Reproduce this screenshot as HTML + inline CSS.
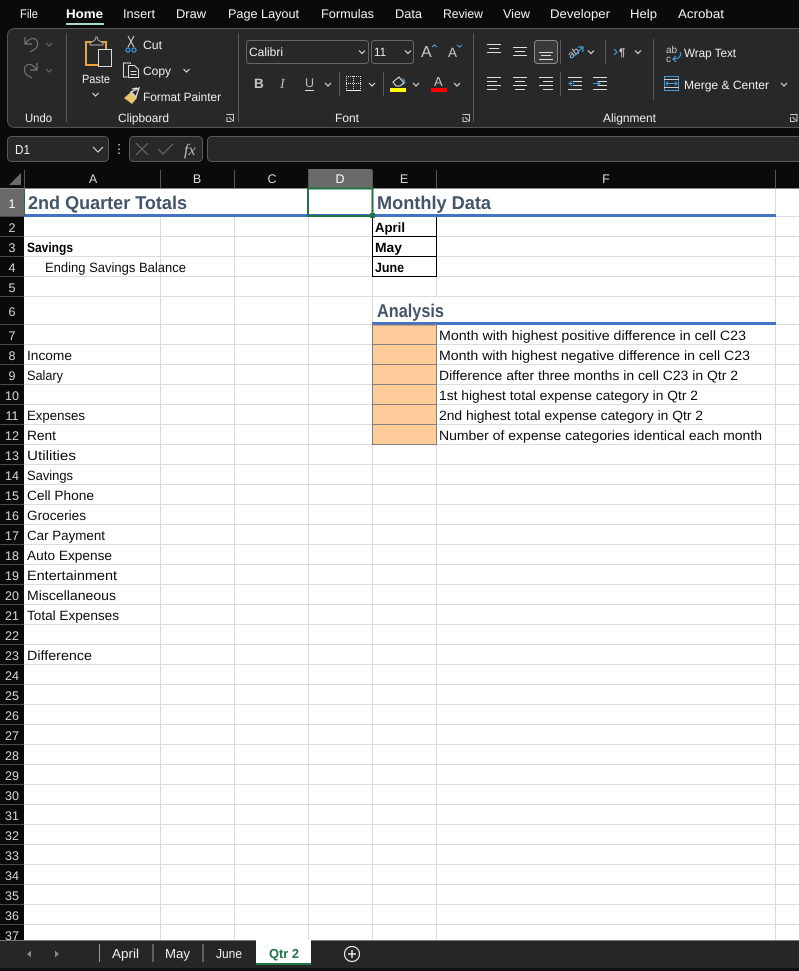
<!DOCTYPE html>
<html><head><meta charset="utf-8"><style>
html,body{margin:0;padding:0;background:#000;overflow:hidden}
svg{display:block}
text{font-family:"Liberation Sans",sans-serif;white-space:pre;text-rendering:geometricPrecision}
.m{font-size:12.5px;fill:#f2f2f2}
.r{font-size:12px;fill:#eeeeee}
.h{font-size:12.5px;fill:#d6d6d6;text-anchor:middle}
.c{font-size:13.5px;fill:#0b0b0b}
.b{font-size:13.5px;fill:#000;font-weight:bold}
.t{font-size:18.5px;fill:#44546a;font-weight:bold}
.i{fill:none;stroke:#dcdcdc;stroke-width:1}
.g{stroke:#dcdcdc;stroke-width:1}
.s{stroke:#5a5a5a;stroke-width:1}
</style></head><body>
<svg xmlns="http://www.w3.org/2000/svg" width="799" height="971" viewBox="0 0 799 971">
<defs><path id="v" d="M0 0l3 3 3-3" fill="none" stroke="#d8d8d8" stroke-width="1.2"/>
<path id="d" d="M0 0l3 3 3-3" fill="none" stroke="#666" stroke-width="1.2"/>
<path id="l" d="M0 0h7v7M.5 2.5V7H5M2.5 2.5L7 7" fill="none" stroke="#c8c8c8" stroke-width="1"/></defs>
<rect width="799" height="971" fill="#0a0a0a"/>

<!-- menu -->
<text class="m" x="20" y="18" textLength="18" lengthAdjust="spacingAndGlyphs">File</text>
<text class="m" x="66" y="18" textLength="37" lengthAdjust="spacingAndGlyphs" font-weight="bold" style="fill:#fff">Home</text>
<rect x="66" y="23" width="38" height="2" fill="#a8dcc0"/>
<text class="m" x="123" y="18" textLength="32" lengthAdjust="spacingAndGlyphs">Insert</text>
<text class="m" x="176" y="18" textLength="30" lengthAdjust="spacingAndGlyphs">Draw</text>
<text class="m" x="228" y="18" textLength="71" lengthAdjust="spacingAndGlyphs">Page Layout</text>
<text class="m" x="321" y="18" textLength="53" lengthAdjust="spacingAndGlyphs">Formulas</text>
<text class="m" x="395" y="18" textLength="27" lengthAdjust="spacingAndGlyphs">Data</text>
<text class="m" x="443" y="18" textLength="40" lengthAdjust="spacingAndGlyphs">Review</text>
<text class="m" x="503" y="18" textLength="27" lengthAdjust="spacingAndGlyphs">View</text>
<text class="m" x="550" y="18" textLength="60" lengthAdjust="spacingAndGlyphs">Developer</text>
<text class="m" x="630" y="18" textLength="27" lengthAdjust="spacingAndGlyphs">Help</text>
<text class="m" x="678" y="18" textLength="46" lengthAdjust="spacingAndGlyphs">Acrobat</text>

<!-- ribbon -->
<rect x="7.5" y="28.5" width="810" height="99" rx="7" fill="#282828" stroke="#555"/>
<path class="s" d="M66.5 33v89M238.5 33v89M473.5 33v89"/>
<!-- undo/redo -->
<path d="M25 37v7h7M25 44c3-4 7-7 10-5 4 2 3 8 0 10l-5 3" fill="none" stroke="#747474" stroke-width="1.2"/>
<path d="M37 63v7h-7M37 70c-3-4-7-7-10-5-4 2-3 8 0 10l5 3" fill="none" stroke="#747474" stroke-width="1.2"/>
<use href="#d" x="46" y="43"/><use href="#d" x="46" y="69"/>
<!-- paste -->
<path d="M92 42h-6v23h12M100 42h6v8" fill="none" stroke="#e8a33a" stroke-width="2"/>
<path d="M90 43l5-3 1-3h1l1 3 5 3v2H90z" fill="#282828" stroke="#aaa"/>
<rect x="98.500" y="49.500" width="13" height="17" fill="#282828" stroke="#d8d8d8"/>
<text class="r" x="82" y="83" textLength="28" lengthAdjust="spacingAndGlyphs">Paste</text>
<use href="#v" x="92.500" y="93"/>
<!-- scissors -->
<path d="M128 36l6 11M134 36l-6 11" class="i"/>
<circle cx="128" cy="50" r="2" fill="none" stroke="#3d9be0" stroke-width="1.200"/><circle cx="134" cy="50" r="2" fill="none" stroke="#3d9be0" stroke-width="1.200"/>
<text class="r" x="143" y="49" textLength="19" lengthAdjust="spacingAndGlyphs">Cut</text>
<!-- copy icon -->
<path d="M127.500 77h-4V63h7v1" class="i"/><path d="M128.500 65.500h6l4 4v8h-10zM130.500 71.500h6M130.500 74.500h6" class="i"/>
<text class="r" x="143" y="75" textLength="28" lengthAdjust="spacingAndGlyphs">Copy</text>
<use href="#v" x="183.500" y="69"/>
<!-- brush -->
<path d="M124 98l7-6 6 6-5 6z" fill="#e9c46a"/>
<path d="M131 92l6-3 2-1-2 6-1 3zM132 89l5-1" fill="none" stroke="#ddd" stroke-width="1.300"/>
<text class="r" x="143" y="101" textLength="78" lengthAdjust="spacingAndGlyphs">Format Painter</text>
<text class="r" x="25" y="122" textLength="27" lengthAdjust="spacingAndGlyphs">Undo</text>
<text class="r" x="118" y="122" textLength="51" lengthAdjust="spacingAndGlyphs">Clipboard</text>
<use href="#l" x="226.500" y="114.500"/>

<!-- font -->
<rect x="246.500" y="40.500" width="122" height="23" rx="3" fill="#282828" stroke="#666"/>
<rect x="371.500" y="40.500" width="42" height="23" rx="3" fill="#282828" stroke="#666"/>
<text class="r" x="249" y="56" textLength="34" lengthAdjust="spacingAndGlyphs">Calibri</text>
<text class="r" x="374" y="56" textLength="12" lengthAdjust="spacingAndGlyphs">11</text>
<use href="#v" x="359" y="50.500"/><use href="#v" x="405" y="50.500"/>
<text x="421" y="57" style="font-size:16px;fill:#c8c8c8">A</text>
<path d="M432 47l2.500-2 2.500 2" fill="none" stroke="#4aa3df" stroke-width="1.100"/>
<text x="448" y="57" style="font-size:13.500px;fill:#c8c8c8">A</text>
<path d="M457 45l2.500 2 2.500-2" fill="none" stroke="#4aa3df" stroke-width="1.100"/>
<text x="254" y="88" style="font-size:13.500px;fill:#c4c4c4;font-weight:bold">B</text>
<text x="280" y="88" style="font-family:'Liberation Serif',serif;font-size:14px;fill:#bbb;font-style:italic">I</text>
<text x="305" y="87" style="font-size:12.500px;fill:#bbb">U</text>
<path d="M305 90.500h9" class="i"/>
<use href="#v" x="325" y="83"/>
<path class="s" d="M339.500 72v24M383.500 72v24M560.500 72v24"/>
<path d="M346 76.500h15M346 83.500h15" stroke="#ddd" stroke-dasharray="1 1" fill="none"/>
<path d="M346.500 76v14M353.500 76v14M360.500 76v14" stroke="#ddd" stroke-dasharray="1 1" fill="none"/>
<path d="M346 90.500h15" stroke="#eee"/>
<use href="#v" x="369" y="83"/>
<path d="M393 82l6-5 5 6-4 3h-4z" fill="none" stroke="#ddd" stroke-width="1.100"/><path d="M402 78c2 0 4 2 3 6z" fill="#4a90c8"/>
<rect x="390" y="88" width="16" height="4" fill="#ff0"/>
<use href="#v" x="413" y="83"/>
<text x="434" y="86" style="font-size:13px;fill:#c8c8c8">A</text>
<rect x="431" y="88" width="16" height="4" fill="#f00"/>
<use href="#v" x="454" y="83"/>
<text class="r" x="335" y="122" textLength="24" lengthAdjust="spacingAndGlyphs">Font</text>
<use href="#l" x="462.500" y="114.500"/>

<!-- alignment -->
<rect x="534.500" y="40.500" width="23" height="23" rx="3" fill="#3a3a3a" stroke="#8a8a8a"/>
<path class="i" d="M487 44.500h14M489 48.500h10M487 52.500h14M513 47.500h14M515 51.500h10M513 55.500h14M539 52.500h14M541 55.500h10M539 59.500h14"/>
<path class="i" d="M487 77.500h14M487 81.500h10M487 85.500h14M487 89.500h10M513 77.500h14M515 81.500h10M513 85.500h14M515 89.500h10M539 77.500h14M543 81.500h10M539 85.500h14M543 89.500h10"/>
<text x="567" y="57" transform="rotate(-35 572 52)" style="font-size:10.500px;fill:#ccc">ab</text>
<path d="M572 58l11-11m-5 0h5v5" fill="none" stroke="#3d9be0" stroke-width="1.200"/>
<use href="#v" x="588" y="50.500"/>
<path class="s" d="M560.500 40v24M605.500 40v24M653.500 39v61"/>
<path d="M614 49l3 3-3 3" fill="none" stroke="#3d9be0" stroke-width="1.200"/>
<text x="619" y="56" style="font-size:11px;fill:#ccc;font-weight:bold">¶</text>
<use href="#v" x="635" y="50.500"/>
<path d="M568 77.500h14M573 81.500h9M573 85.500h9M568 89.500h14" class="i"/><path d="M572 81l-3 2.500 3 2.500M569 83.500h5" fill="none" stroke="#3d9be0"/>
<path d="M593 77.500h14M598 81.500h9M598 85.500h9M593 89.500h14" class="i"/><path d="M597 81l3 2.500-3 2.500M593 83.500h6" fill="none" stroke="#3d9be0"/>
<text x="666" y="53" style="font-size:10px;fill:#ccc">ab</text>
<text x="666" y="62" style="font-size:10px;fill:#ccc">c</text>
<path d="M680 52c2 4-1 7-7 7m3-3l-3 3 3 3" fill="none" stroke="#3d9be0" stroke-width="1.200"/>
<text class="r" x="684" y="57" textLength="52" lengthAdjust="spacingAndGlyphs">Wrap Text</text>
<rect x="664.500" y="76.500" width="14" height="14" fill="none" stroke="#3d9be0"/>
<path d="M664 79.500h15M664 87.500h15" stroke="#ccc"/>
<path d="M666 83.500h11M668 81.500l-2 2 2 2M675 81.500l2 2-2 2" fill="none" stroke="#3d9be0"/>
<text class="r" x="684" y="89" textLength="85" lengthAdjust="spacingAndGlyphs">Merge &amp; Center</text>
<use href="#v" x="781" y="83"/>
<text class="r" x="603" y="122" textLength="53" lengthAdjust="spacingAndGlyphs">Alignment</text>
<use href="#l" x="790" y="114.500"/>

<!-- formula bar -->
<rect x="7.500" y="136.500" width="101" height="25" rx="4" fill="#282828" stroke="#5a5a5a"/>
<text x="15" y="154" textLength="15" lengthAdjust="spacingAndGlyphs" style="font-size:13px;fill:#eee">D1</text>
<path d="M93 147l5 5 5-5" fill="none" stroke="#d0d0d0" stroke-width="1.200"/>
<path d="M119 144v1.500M119 148.500v1.500M119 152.500v1.500" stroke="#bbb" stroke-width="1.600"/>
<rect x="129.500" y="136.500" width="73" height="25" rx="4" fill="#282828" stroke="#5a5a5a"/>
<path d="M136 143l12 12M148 143l-12 12M158 149l5 5 10-10" fill="none" stroke="#6a6a6a" stroke-width="1.200"/>
<text x="184" y="155" style="font-family:'Liberation Serif',serif;font-size:16px;font-style:italic;fill:#b8b8b8">fx</text>
<rect x="207.500" y="136.500" width="640" height="25" rx="4" fill="#282828" stroke="#5a5a5a"/>

<!-- sheet -->
<rect x="24" y="189" width="775" height="751" fill="#fff"/>
<rect x="0" y="188" width="799" height="1" fill="#888"/>
<rect x="308" y="169" width="64" height="19" fill="#6a6a6a"/>
<rect x="0" y="189" width="24" height="27" fill="#6a6a6a"/>
<path d="M9 185L21 173V185z" fill="#6a6a6a"/>
<path d="M24.500 170v18M160.500 170v18M234.500 170v18M308.500 170v18M372.500 170v18M436.500 170v18M775.500 170v18" stroke="#555"/>
<text class="h" x="93" y="183">A</text><text class="h" x="197" y="183">B</text><text class="h" x="272" y="183">C</text><text class="h" x="340" y="183" style="fill:#fff">D</text><text class="h" x="404" y="183">E</text><text class="h" x="606" y="183">F</text>

<!-- grid horizontal -->
<path class="g" d="M24 236.500h775M24 256.500h775M24 276.500h775M24 296.500h775M24 344.500h775M24 364.500h775M24 384.500h775M24 404.500h775M24 424.500h775M24 444.500h775M24 464.500h775M24 484.500h775M24 504.500h775M24 524.500h775M24 544.500h775M24 564.500h775M24 584.500h775M24 604.500h775M24 624.500h775M24 644.500h775M24 664.500h775M24 684.500h775M24 704.500h775M24 724.500h775M24 744.500h775M24 764.500h775M24 784.500h775M24 804.500h775M24 824.500h775M24 844.500h775M24 864.500h775M24 884.500h775M24 904.500h775M24 924.500h775M24 324.500h348M776 324.500h23M776 216.500h23"/>
<path class="g" d="M160.500 216v724M234.500 216v724M308.500 216v724M372.500 216v724M436.500 216v80M436.500 324v616M775.500 189v751"/>
<!-- row header separators -->
<path d="M0 216.500h24M0 236.500h24M0 256.500h24M0 276.500h24M0 296.500h24M0 324.500h24M0 344.500h24M0 364.500h24M0 384.500h24M0 404.500h24M0 424.500h24M0 444.500h24M0 464.500h24M0 484.500h24M0 504.500h24M0 524.500h24M0 544.500h24M0 564.500h24M0 584.500h24M0 604.500h24M0 624.500h24M0 644.500h24M0 664.500h24M0 684.500h24M0 704.500h24M0 724.500h24M0 744.500h24M0 764.500h24M0 784.500h24M0 804.500h24M0 824.500h24M0 844.500h24M0 864.500h24M0 884.500h24M0 904.500h24M0 924.500h24" stroke="#4a4a4a"/>
<!-- row numbers -->
<text class="h" x="12" y="208" style="fill:#fff">1</text><text class="h" x="12" y="232">2</text><text class="h" x="12" y="252">3</text><text class="h" x="12" y="272">4</text><text class="h" x="12" y="292">5</text><text class="h" x="12" y="316">6</text><text class="h" x="12" y="340">7</text><text class="h" x="12" y="360">8</text><text class="h" x="12" y="380">9</text><text class="h" x="12" y="400">10</text><text class="h" x="12" y="420">11</text><text class="h" x="12" y="440">12</text><text class="h" x="12" y="460">13</text><text class="h" x="12" y="480">14</text><text class="h" x="12" y="500">15</text><text class="h" x="12" y="520">16</text><text class="h" x="12" y="540">17</text><text class="h" x="12" y="560">18</text><text class="h" x="12" y="580">19</text><text class="h" x="12" y="600">20</text><text class="h" x="12" y="620">21</text><text class="h" x="12" y="640">22</text><text class="h" x="12" y="660">23</text><text class="h" x="12" y="680">24</text><text class="h" x="12" y="700">25</text><text class="h" x="12" y="720">26</text><text class="h" x="12" y="740">27</text><text class="h" x="12" y="760">28</text><text class="h" x="12" y="780">29</text><text class="h" x="12" y="800">30</text><text class="h" x="12" y="820">31</text><text class="h" x="12" y="840">32</text><text class="h" x="12" y="860">33</text><text class="h" x="12" y="880">34</text><text class="h" x="12" y="900">35</text><text class="h" x="12" y="920">36</text><text class="h" x="12" y="940">37</text>

<!-- blue rules -->
<rect x="24" y="214" width="752" height="3" fill="#4472c4"/>
<rect x="372" y="322" width="404" height="3" fill="#4472c4"/>
<!-- titles -->
<text class="t" x="28" y="209" textLength="159" lengthAdjust="spacingAndGlyphs">2nd Quarter Totals</text>
<text class="t" x="377" y="209" textLength="114" lengthAdjust="spacingAndGlyphs">Monthly Data</text>
<text class="t" x="377" y="317" textLength="67" lengthAdjust="spacingAndGlyphs">Analysis</text>
<!-- monthly box -->
<path d="M372.500 217v59.500h64V217M372 236.500h65M372 256.500h65" fill="none" stroke="#000"/>
<text class="b" x="375" y="232" textLength="30" lengthAdjust="spacingAndGlyphs">April</text>
<text class="b" x="375" y="252" textLength="27" lengthAdjust="spacingAndGlyphs">May</text>
<text class="b" x="375" y="272" textLength="29" lengthAdjust="spacingAndGlyphs">June</text>
<!-- orange -->
<rect x="372.500" y="325" width="64" height="119.500" fill="#ffcc99" stroke="#7f7f7f"/>
<path d="M372 344.500h65M372 364.500h65M372 384.500h65M372 404.500h65M372 424.500h65" stroke="#7f7f7f"/>
<text class="c" x="439" y="340" textLength="307" lengthAdjust="spacingAndGlyphs">Month with highest positive difference in cell C23</text>
<text class="c" x="439" y="360" textLength="311" lengthAdjust="spacingAndGlyphs">Month with highest negative difference in cell C23</text>
<text class="c" x="439" y="380" textLength="299" lengthAdjust="spacingAndGlyphs">Difference after three months in cell C23 in Qtr 2</text>
<text class="c" x="439" y="400" textLength="259" lengthAdjust="spacingAndGlyphs">1st highest total expense category in Qtr 2</text>
<text class="c" x="439" y="420" textLength="264" lengthAdjust="spacingAndGlyphs">2nd highest total expense category in Qtr 2</text>
<text class="c" x="439" y="440" textLength="323" lengthAdjust="spacingAndGlyphs">Number of expense categories identical each month</text>
<!-- col A -->
<text class="b" x="27" y="252" textLength="46" lengthAdjust="spacingAndGlyphs">Savings</text>
<text class="c" x="45" y="272" textLength="141" lengthAdjust="spacingAndGlyphs">Ending Savings Balance</text>
<text class="c" x="27" y="360" textLength="45" lengthAdjust="spacingAndGlyphs">Income</text>
<text class="c" x="27" y="380" textLength="36" lengthAdjust="spacingAndGlyphs">Salary</text>
<text class="c" x="27" y="420" textLength="58" lengthAdjust="spacingAndGlyphs">Expenses</text>
<text class="c" x="27" y="440" textLength="29" lengthAdjust="spacingAndGlyphs">Rent</text>
<text class="c" x="27" y="460" textLength="49" lengthAdjust="spacingAndGlyphs">Utilities</text>
<text class="c" x="27" y="480" textLength="46" lengthAdjust="spacingAndGlyphs">Savings</text>
<text class="c" x="27" y="500" textLength="67" lengthAdjust="spacingAndGlyphs">Cell Phone</text>
<text class="c" x="27" y="520" textLength="59" lengthAdjust="spacingAndGlyphs">Groceries</text>
<text class="c" x="27" y="540" textLength="78" lengthAdjust="spacingAndGlyphs">Car Payment</text>
<text class="c" x="27" y="560" textLength="85" lengthAdjust="spacingAndGlyphs">Auto Expense</text>
<text class="c" x="27" y="580" textLength="90" lengthAdjust="spacingAndGlyphs">Entertainment</text>
<text class="c" x="27" y="600" textLength="89" lengthAdjust="spacingAndGlyphs">Miscellaneous</text>
<text class="c" x="27" y="620" textLength="92" lengthAdjust="spacingAndGlyphs">Total Expenses</text>
<text class="c" x="27" y="660" textLength="65" lengthAdjust="spacingAndGlyphs">Difference</text>
<!-- selection -->
<rect x="24" y="189" width="1" height="27" fill="#217346"/>
<rect x="308" y="188.500" width="64.500" height="27.500" fill="none" stroke="#217346" stroke-width="2"/>
<rect x="370" y="213" width="5" height="5" fill="#217346"/>

<!-- tabs -->
<rect x="0" y="940" width="799" height="28" fill="#262626"/>
<rect x="0" y="940" width="799" height="1" fill="#777"/>
<rect x="0" y="968" width="799" height="3" fill="#0f0f0f"/>
<path d="M31 950.500v7l-4-3.500zM55 950.500v7l4-3.500z" fill="#8a8a8a"/>
<path d="M100 944v18M153.500 944v18M203.500 944v18" stroke="#999" transform="translate(-.5 0)"/>
<rect x="256" y="940" width="55" height="23" fill="#fff"/>
<rect x="256" y="963" width="55" height="2" fill="#217346"/>
<text class="r" x="112" y="958" textLength="27" lengthAdjust="spacingAndGlyphs" style="font-size:13px">April</text>
<text class="r" x="165" y="958" textLength="25" lengthAdjust="spacingAndGlyphs" style="font-size:13px">May</text>
<text class="r" x="216" y="958" textLength="26" lengthAdjust="spacingAndGlyphs" style="font-size:13px">June</text>
<text x="269" y="958" textLength="30" lengthAdjust="spacingAndGlyphs" style="font-size:13px;font-weight:bold;fill:#217346">Qtr 2</text>
<circle cx="352" cy="954" r="7.500" fill="none" stroke="#e8e8e8" stroke-width="1.200"/>
<path d="M348 954h8M352 950v8" stroke="#e8e8e8" stroke-width="1.500"/>
</svg>
</body></html>
